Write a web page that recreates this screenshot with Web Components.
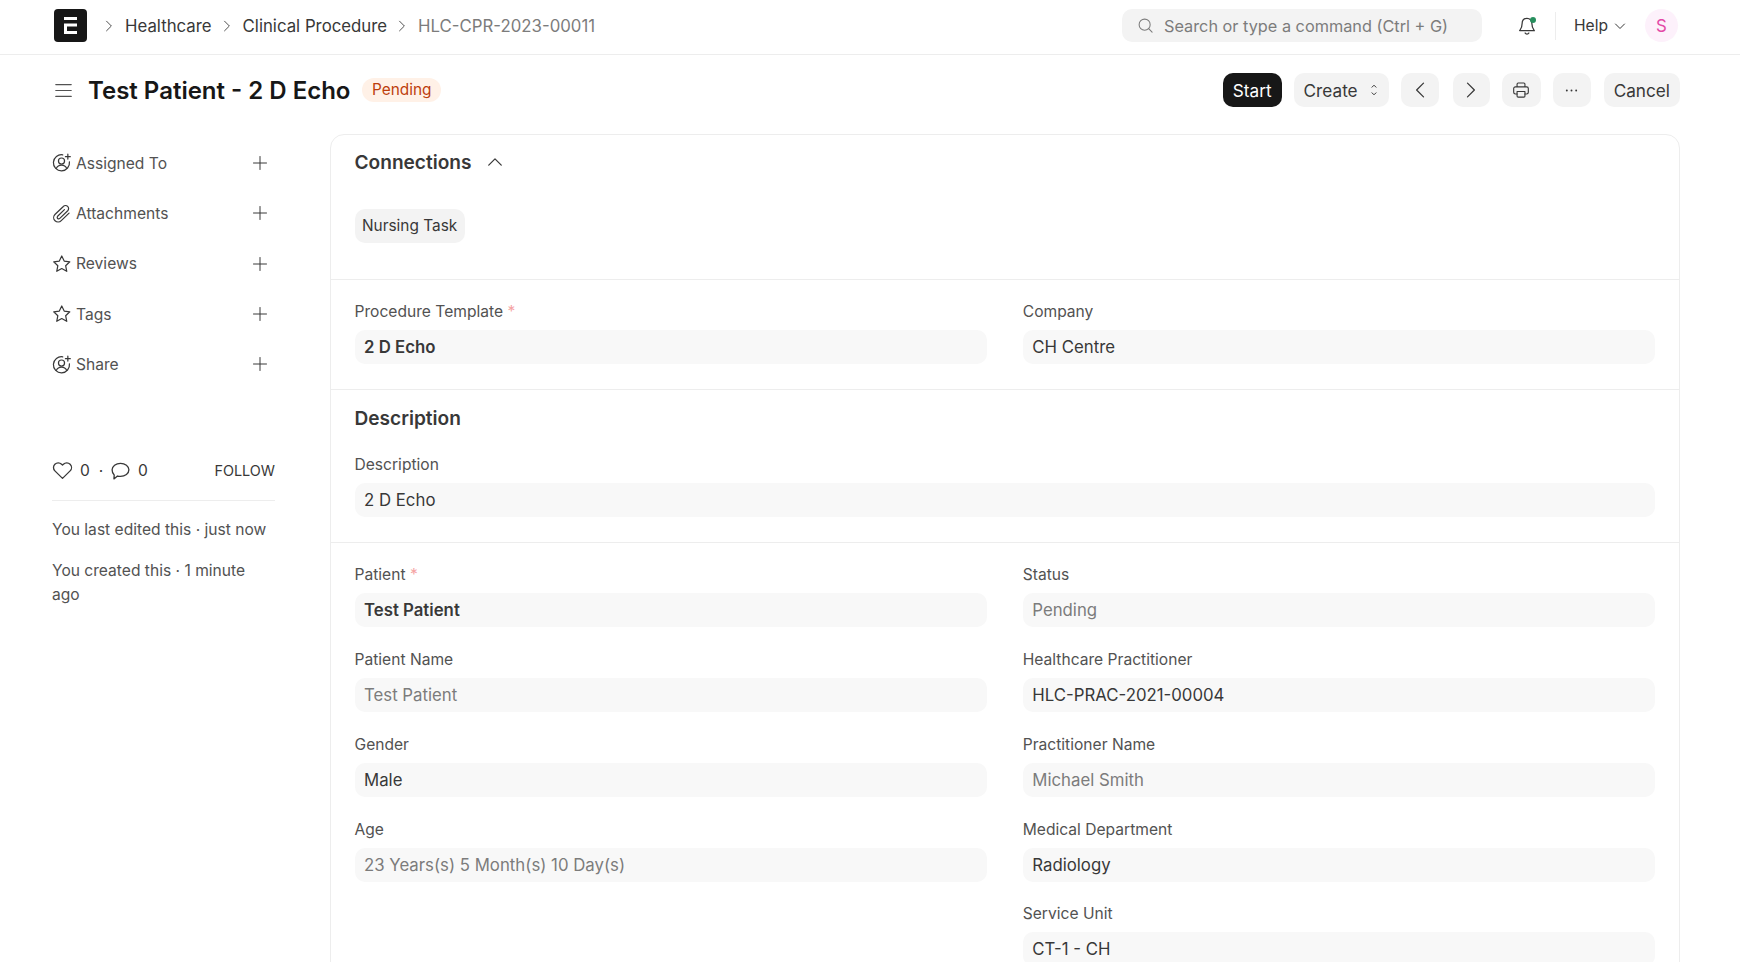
<!DOCTYPE html>
<html lang="en">
<head>
<meta charset="utf-8">
<title>HLC-CPR-2023-00011</title>
<style>
  html, body { margin: 0; height: 962px; overflow: hidden; background: #fff; }
  body { font-family: Inter, "Liberation Sans", sans-serif; color: #171717; }
</style>
</head>
<body>
<app-navbar></app-navbar>
<page-head></page-head>
<div id="page" style="display:flex;padding:0 60px 0 52px;gap:55px;align-items:flex-start">
  <form-sidebar></form-sidebar>
  <form-card style="flex:1;min-width:0">
    <form-section no-border>
      <connections-block></connections-block>
    </form-section>
    <form-section class="first">
      <div style="display:grid;grid-template-columns:1fr 1fr;column-gap:36px">
        <form-field label="Procedure Template" required value="2 D Echo" bold></form-field>
        <form-field label="Company" value="CH Centre"></form-field>
      </div>
    </form-section>
    <form-section heading="Description">
      <form-field label="Description" value="2 D Echo"></form-field>
    </form-section>
    <form-section class="last">
      <div style="display:grid;grid-template-columns:1fr 1fr;column-gap:36px">
        <div>
          <form-field label="Patient" required value="Test Patient" bold></form-field>
          <form-field label="Patient Name" value="Test Patient" muted></form-field>
          <form-field label="Gender" value="Male"></form-field>
          <form-field label="Age" value="23 Years(s) 5 Month(s) 10 Day(s)" muted></form-field>
        </div>
        <div>
          <form-field label="Status" value="Pending" muted></form-field>
          <form-field label="Healthcare Practitioner" value="HLC-PRAC-2021-00004"></form-field>
          <form-field label="Practitioner Name" value="Michael Smith" muted></form-field>
          <form-field label="Medical Department" value="Radiology"></form-field>
          <form-field label="Service Unit" value="CT-1 - CH"></form-field>
        </div>
      </div>
    </form-section>
  </form-card>
</div>

<script>
  const svg = (body, size = 16, extra = "") =>
    `<svg width="${size}" height="${size}" viewBox="0 0 16 16" fill="none" stroke="currentColor" stroke-width="1" stroke-linecap="round" stroke-linejoin="round" ${extra}>${body}</svg>`;

  const ICONS = {
    menu: '<path d="M1.5 3h13M1.5 8h13M1.5 13h13"/>',
    chevRight: '<path d="M5.2 2.5 10.7 8l-5.5 5.5"/>',
    chevLeft: '<path d="M10.8 2.5 5.3 8l5.5 5.5"/>',
    chevDown: '<path d="M3.5 6 8 10.5 12.5 6"/>',
    chevUp: '<path d="M3 10.5 8 5.5l5 5"/>',
    updown: '<path d="M6 5.2 8 3.2l2 2M6 10.8l2 2 2-2"/>',
    search: '<circle cx="7.2" cy="7.2" r="5.2"/><path d="m11 11 3.2 3.2"/>',
    bell: '<path d="M8 1.8c-2.5 0-3.9 1.9-3.9 4.2 0 3.6-1.3 4.8-2 5.7h11.8c-.7-.9-2-2.1-2-5.7 0-2.3-1.4-4.2-3.9-4.2zM6.5 13.6c.3.6.8.9 1.5.9s1.2-.3 1.5-.9"/>',
    print: '<path d="M4.5 5.2V2.8a1 1 0 0 1 1-1h5a1 1 0 0 1 1 1v2.4M4.5 11.5H3a1.5 1.5 0 0 1-1.5-1.5V6.7A1.5 1.5 0 0 1 3 5.2h10a1.5 1.5 0 0 1 1.5 1.5V10a1.5 1.5 0 0 1-1.5 1.5h-1.5"/><path d="M4.5 9.3h7v4a1 1 0 0 1-1 1h-5a1 1 0 0 1-1-1z"/>',
    dots: '<circle cx="3.6" cy="8" r=".9" fill="currentColor" stroke="none"/><circle cx="8" cy="8" r=".9" fill="currentColor" stroke="none"/><circle cx="12.4" cy="8" r=".9" fill="currentColor" stroke="none"/>',
    plus: '<path d="M8 1.5v13M1.5 8h13"/>',
    assign: '<path d="M14.3 7.2A6.6 6.6 0 1 1 8.8 1.5"/><circle cx="7.8" cy="6.6" r="2.5"/><path d="M3.6 12.6c.7-1.6 2.3-2.6 4.2-2.6s3.5 1 4.2 2.6M13 1v4M11 3h4"/>',
    clip: '<path d="M14 7.5 7.6 13.6a3.6 3.6 0 0 1-5.2-5L9.3 2a2.5 2.5 0 0 1 3.6 3.5L6.4 11.8a1.2 1.2 0 0 1-1.8-1.7l5.6-5.5"/>',
    star: '<path d="m8 1.6 2 4.2 4.6.6-3.4 3.2.9 4.6L8 11.9l-4.1 2.3.9-4.6L1.4 6.4 6 5.8z"/>',
    heart: '<path d="M8 14 2.2 8.3a3.6 3.6 0 0 1 0-5.1 3.6 3.6 0 0 1 5.1 0l.7.7.7-.7a3.6 3.6 0 0 1 5.1 5.1z"/>',
    comment: '<path d="M8 2.5c3.5 0 6.4 2.2 6.4 5s-2.9 5-6.4 5c-.8 0-1.6-.1-2.3-.3L3 14.4l.2-2.9C2.2 10.6 1.6 9.1 1.6 7.5c0-2.8 2.9-5 6.4-5z"/>'
  };

  class AppNavbar extends HTMLElement {
    constructor() {
      super();
      this.attachShadow({ mode: "open" });
    }
    connectedCallback() {
      this.shadowRoot.innerHTML = `
        <style>
          :host { display: flex; align-items: center; height: 51px; padding: 0 62px 3px 54px; border-bottom: 1px solid #ededed; font-size: 16.8px; color: #383838; }
          .logo { width: 33px; height: 33px; background: #171717; border-radius: 4px; display: flex; align-items: center; justify-content: center; margin-right: 15px; }
          .crumb { display: flex; align-items: center; }
          .crumb svg { margin-right: 9px; color: #383838; }
          .crumb span { margin-right: 8px; }
          .crumb.last { color: #7c7c7c; }
          .crumb.last svg { color: #383838; }
          .spacer { flex: 1; }
          .search { width: 360px; height: 33px; box-sizing: border-box; background: #f3f3f3; border-radius: 10px; display: flex; align-items: center; padding: 0 15px; gap: 10px; color: #7c7c7c; font-size: 16.3px; }
          .bell { position: relative; margin-left: 35px; color: #383838; display: flex; }
          .bell i { position: absolute; top: 1px; right: 1px; width: 6px; height: 6px; border-radius: 50%; background: #278f5e; }
          .sep { width: 1px; height: 28px; background: #ededed; margin: 0 18px 0 18px; }
          .help { display: flex; align-items: center; gap: 4px; font-size: 15.6px; }
          .avatar { width: 33px; height: 33px; border-radius: 50%; background: #fdf1fb; color: #e34aa6; display: flex; align-items: center; justify-content: center; margin-left: 17px; font-size: 16.8px; }
        </style>
        <div class="logo">
          <svg width="13" height="17" viewBox="0 0 13 17"><path fill="#fff" d="M0 0h13v3H0zM0 6.5h13v3H3v4.5h10v3H0z"/></svg>
        </div>
        <div class="crumb">${svg(ICONS.chevRight, 14)}<span>Healthcare</span></div>
        <div class="crumb">${svg(ICONS.chevRight, 14)}<span>Clinical Procedure</span></div>
        <div class="crumb last">${svg(ICONS.chevRight, 14)}<span>HLC-CPR-2023-00011</span></div>
        <div class="spacer"></div>
        <div class="search">${svg(ICONS.search, 17)}<span>Search or type a command (Ctrl + G)</span></div>
        <div class="bell">${svg(ICONS.bell, 20)}<i></i></div>
        <div class="sep"></div>
        <div class="help">Help ${svg(ICONS.chevDown, 16)}</div>
        <div class="avatar">S</div>
      `;
    }
  }

  class PageHead extends HTMLElement {
    constructor() {
      super();
      this.attachShadow({ mode: "open" });
    }
    connectedCallback() {
      this.shadowRoot.innerHTML = `
        <style>
          :host { display: flex; align-items: center; height: 70px; margin-bottom: 9px; padding: 0 60px 0 54px; }
          .menu { color: #525252; display: flex; margin-right: 15px; }
          h1 { margin: 0; font-size: 24px; font-weight: 600; color: #171717; }
          .pill { margin-left: 12px; background: #fff1e7; color: #bd3e0c; border-radius: 12px; font-size: 15.4px; padding: 2px 9.5px; line-height: 20px; }
          .spacer { flex: 1; }
          .btn { height: 34px; box-sizing: border-box; border-radius: 10px; background: #f3f3f3; color: #383838; display: flex; align-items: center; justify-content: center; font-size: 17.2px; padding: 0 10px; margin-left: 12px; }
          .btn.dark { background: #171717; color: #fff; padding: 0 10px; }
          .btn.icon { width: 38px; padding: 0; }
          .btn.create { gap: 8px; padding-right: 7px; }
          .btn.wide-gap { margin-left: 13px; }
        </style>
        <span class="menu">${svg(ICONS.menu, 19)}</span>
        <h1>Test Patient - 2 D Echo</h1>
        <span class="pill">Pending</span>
        <div class="spacer"></div>
        <div class="btn dark">Start</div>
        <div class="btn create">Create ${svg(ICONS.updown, 16)}</div>
        <div class="btn icon">${svg(ICONS.chevLeft, 20)}</div>
        <div class="btn icon" style="width:37px;margin-left:14px">${svg(ICONS.chevRight, 20)}</div>
        <div class="btn icon" style="width:39px">${svg(ICONS.print, 18)}</div>
        <div class="btn icon">${svg(ICONS.dots, 17)}</div>
        <div class="btn wide-gap">Cancel</div>
      `;
    }
  }

  class FormSidebar extends HTMLElement {
    constructor() {
      super();
      this.attachShadow({ mode: "open" });
    }
    connectedCallback() {
      const items = [
        ["Assigned To", ICONS.assign],
        ["Attachments", ICONS.clip],
        ["Reviews", ICONS.star],
        ["Tags", ICONS.star],
        ["Share", ICONS.assign]
      ];
      this.shadowRoot.innerHTML = `
        <style>
          :host { display: block; width: 223px; flex: none; font-size: 15.6px; color: #525252; }
          .items { padding-top: 4px; }
          .item { display: flex; align-items: center; height: 50.3px; gap: 4.5px; }
          .item svg:first-child { color: #383838; }
          .item .add { margin-left: auto; margin-right: 7.5px; color: #383838; }
          .stats { display: flex; align-items: center; margin-top: 64px; height: 34px; color: #383838; border-bottom: 1px solid #ededed; padding-bottom: 13px; }
          .stats span { margin: 0 9px 0 7px; }
          .stats svg { color: #383838; }
          .stats .gap { margin: 0 6.7px 0 0; }
          .follow { margin-left: auto; font-size: 14.4px; }
          p { margin: 0; line-height: 24px; }
          .a { margin-top: 17px; }
          .b { margin-top: 17px; }
        </style>
        <div class="items">
          ${items.map(([t, i]) => `<div class="item">${svg(i, 19.5)}<span>${t}</span>${svg(ICONS.plus, 16, 'class="add"')}</div>`).join("")}
        </div>
        <div class="stats">
          ${svg(ICONS.heart, 21)}<span>0</span>·<span class="gap"></span>${svg(ICONS.comment, 21)}<span>0</span>
          <div class="follow">FOLLOW</div>
        </div>
        <p class="a">You last edited this · just now</p>
        <p class="b">You created this · 1 minute ago</p>
      `;
    }
  }

  class FormCard extends HTMLElement {
    constructor() {
      super();
      this.attachShadow({ mode: "open" });
    }
    connectedCallback() {
      this.shadowRoot.innerHTML = `
        <style>
          :host { display: block; border: 1px solid #ededed; border-radius: 14px; height: 1000px; }
        </style>
        <slot></slot>
      `;
    }
  }

  class FormSection extends HTMLElement {
    constructor() {
      super();
      this.attachShadow({ mode: "open" });
    }
    connectedCallback() {
      const h = this.getAttribute("heading");
      this.shadowRoot.innerHTML = `
        <style>
          :host { display: block; padding: 16px 24px 2.2px 23.5px; border-top: 1px solid #ededed; }
          :host([no-border]) { border-top: 0; padding: 0 24px 0 23.5px; }
          :host(.first) { padding-top: 22px; padding-bottom: 2.2px; }
          :host(.last) { padding-top: 22.3px; }
          h3 { margin: 0 0 25px; font-size: 19.1px; line-height: 24px; font-weight: 600; color: #383838; }
        </style>
        ${h ? `<h3>${h}</h3>` : ""}
        <slot></slot>
      `;
    }
  }

  class ConnectionsBlock extends HTMLElement {
    constructor() {
      super();
      this.attachShadow({ mode: "open" });
    }
    connectedCallback() {
      this.shadowRoot.innerHTML = `
        <style>
          :host { display: block; height: 144px; padding-top: 15px; box-sizing: border-box; }
          .head { display: flex; align-items: center; gap: 13px; font-size: 19.1px; font-weight: 600; line-height: 24px; color: #383838; }
          .head svg { color: #383838; }
          .chip { display: inline-block; margin-top: 35px; background: #f3f3f3; border-radius: 10px; font-size: 15.4px; line-height: 34px; padding: 0 7.5px; color: #383838; }
        </style>
        <div class="head">Connections ${svg(ICONS.chevUp, 20)}</div>
        <div class="chip">Nursing Task</div>
      `;
    }
  }

  class FormField extends HTMLElement {
    constructor() {
      super();
      this.attachShadow({ mode: "open" });
    }
    connectedCallback() {
      const req = this.hasAttribute("required") ? ' <b>*</b>' : "";
      this.shadowRoot.innerHTML = `
        <style>
          :host { display: block; height: 84.8px; }
          label { display: block; font-size: 15.6px; line-height: 20px; color: #525252; margin-bottom: 8px; }
          b { color: #f5a3a3; font-weight: 400; }
          .val { height: 34px; box-sizing: border-box; background: #f8f8f8; border-radius: 10px; padding: 0 9.5px; font-size: 16.8px; line-height: 34px; color: #383838; }
          :host([bold]) .val { font-weight: 600; }
          :host([muted]) .val { color: #7c7c7c; }
        </style>
        <label>${this.getAttribute("label")}${req}</label>
        <div class="val">${this.getAttribute("value")}</div>
      `;
    }
  }

  customElements.define("app-navbar", AppNavbar);
  customElements.define("page-head", PageHead);
  customElements.define("form-sidebar", FormSidebar);
  customElements.define("form-card", FormCard);
  customElements.define("form-section", FormSection);
  customElements.define("connections-block", ConnectionsBlock);
  customElements.define("form-field", FormField);
</script>
</body>
</html>
